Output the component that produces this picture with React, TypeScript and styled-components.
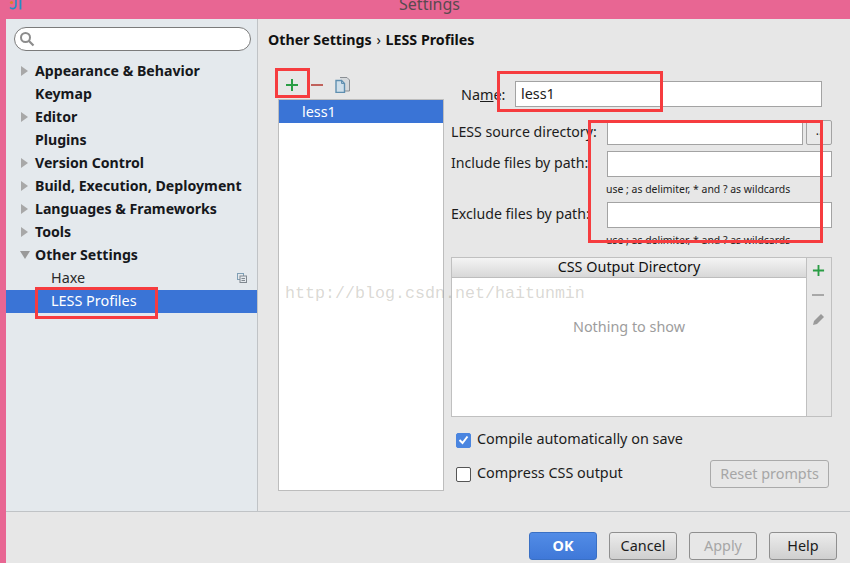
import React from "react";
import styled, { createGlobalStyle } from "styled-components";

const sans = `"Noto Sans", "Open Sans", sans-serif`;

const GlobalStyle = createGlobalStyle`
  html, body { margin: 0; padding: 0; background: #e7e7e7; }
  body { width: 850px; height: 563px; overflow: hidden; font-family: ${sans}; }
`;

const treeItems = [
  { label: "Appearance & Behavior", arrow: "right" },
  { label: "Keymap" },
  { label: "Editor", arrow: "right" },
  { label: "Plugins" },
  { label: "Version Control", arrow: "right" },
  { label: "Build, Execution, Deployment", arrow: "right" },
  { label: "Languages & Frameworks", arrow: "right" },
  { label: "Tools", arrow: "right" },
  { label: "Other Settings", arrow: "down" },
];

const Logo = () => (
  <LogoSvg viewBox="0 0 14 10" width="14" height="10">
    <circle cx="2.5" cy="2.5" r="1.6" fill="#d9822b" />
    <path d="M1 7.5 C3 9.5 7 9 7 5 V0" stroke="#1f8fc4" strokeWidth="1.6" fill="none" />
    <path d="M11.5 0 V9.5" stroke="#1f8fc4" strokeWidth="1.8" fill="none" />
  </LogoSvg>
);

const Plus = ({ size = 14 }: { size?: number }) => (
  <svg width={size} height={size} viewBox="0 0 14 14">
    <path d="M7 1 V13 M1 7 H13" stroke="#2a9d45" strokeWidth="2" />
  </svg>
);

const CopyIcon = () => (
  <svg width="15" height="16" viewBox="0 0 15 16">
    <path d="M5 0.5 H12 L14.5 3 V14 H10" fill="#d5d9dc" stroke="#8a8f94" />
    <path d="M1 3.5 H6.5 L9.5 6.5 V15.5 H1 Z" fill="#cfdfea" stroke="#5f8fb0" strokeWidth="1.4" />
    <path d="M6.5 3.5 V6.5 H9.5" fill="none" stroke="#5f8fb0" />
  </svg>
);

const App = () => (
  <>
    <GlobalStyle />
    <Screen>
      <TitleBar>
        <Logo />
        <TitleText>Settings</TitleText>
      </TitleBar>
      <Main>
        <Sidebar>
          <SearchBox>
            <svg width="16" height="16" viewBox="0 0 16 16">
              <circle cx="6.5" cy="6.5" r="4.5" fill="none" stroke="#8c8c8c" strokeWidth="2" />
              <path d="M10 10 L14.5 14.5" stroke="#8c8c8c" strokeWidth="2.2" />
            </svg>
          </SearchBox>
          <Tree>
            {treeItems.map((item) => (
              <TreeRow key={item.label}>
                <Arrow $dir={item.arrow} />
                <TreeLabel>{item.label}</TreeLabel>
              </TreeRow>
            ))}
            <SubRow>
              Haxe
              <svg width="10" height="10" viewBox="0 0 10 10">
                <rect x="0.5" y="0.5" width="6" height="6" fill="none" stroke="#7f9fb5" />
                <rect x="3" y="3" width="6.5" height="6.5" fill="#e4e9ed" stroke="#808890" />
                <path d="M4.5 5.5 H8 M4.5 7.5 H8" stroke="#808890" />
              </svg>
            </SubRow>
            <SubRow $selected>LESS Profiles</SubRow>
          </Tree>
        </Sidebar>
        <Content>
          <Breadcrumb>
            Other Settings <Chevron>›</Chevron> LESS Profiles
          </Breadcrumb>
          <Columns>
            <ListColumn>
              <ListToolbar>
                <Plus size={14} />
                <MinusBar />
                <CopyIcon />
              </ListToolbar>
              <ProfileList>
                <ProfileRow>less1</ProfileRow>
              </ProfileList>
            </ListColumn>
            <Splitter />
            <FormColumn>
              <NameRow>
                <NameLabel>
                  Na<u>m</u>e:
                </NameLabel>
                <TextBox $width={307}>less1</TextBox>
              </NameRow>
              <DirRow>
                <FieldLabel>LESS source directory:</FieldLabel>
                <TextBox $width={196} $height={25} />
                <BrowseButton>..</BrowseButton>
              </DirRow>
              <PathRow>
                <FieldLabel>Include files by path:</FieldLabel>
                <TextBox $width={225} />
              </PathRow>
              <Hint>use ; as delimiter, * and ? as wildcards</Hint>
              <PathRow>
                <FieldLabel>Exclude files by path:</FieldLabel>
                <TextBox $width={225} />
              </PathRow>
              <Hint>use ; as delimiter, * and ? as wildcards</Hint>
              <TablePanel>
                <Table>
                  <TableHeader>CSS Output Directory</TableHeader>
                  <TableBody>Nothing to show</TableBody>
                </Table>
                <TableTools>
                  <Plus size={13} />
                  <SmallMinus />
                  <svg width="13" height="13" viewBox="0 0 13 13">
                    <path d="M1 12 L2 8 L9 1 L12 4 L5 11 Z" fill="#9a9a9a" />
                  </svg>
                </TableTools>
              </TablePanel>
              <CheckRow>
                <CheckBox $checked>
                  <svg width="11" height="10" viewBox="0 0 11 10">
                    <path d="M1.5 5 L4.5 8 L9.5 1.5" fill="none" stroke="#fff" strokeWidth="2" />
                  </svg>
                </CheckBox>
                <CheckText>Compile automatically on save</CheckText>
              </CheckRow>
              <CompressRow>
                <CheckBox />
                <CheckText>Compress CSS output</CheckText>
                <ResetButton>Reset prompts</ResetButton>
              </CompressRow>
            </FormColumn>
          </Columns>
        </Content>
      </Main>
      <Footer>
        <DialogButton $primary>OK</DialogButton>
        <DialogButton>Cancel</DialogButton>
        <DialogButton $disabled>Apply</DialogButton>
        <DialogButton>Help</DialogButton>
      </Footer>
      <Watermark>http://blog.csdn.net/haitunmin</Watermark>
      <RedBox $x={275} $y={68} $w={35} $h={30} />
      <RedBox $x={497} $y={71} $w={166} $h={41} />
      <RedBox $x={588} $y={120} $w={235} $h={123} />
      <RedBox $x={35} $y={287} $w={123} $h={32} />
    </Screen>
  </>
);

export default App;

const Screen = styled.div`
  position: relative;
  width: 850px;
  height: 563px;
  display: flex;
  flex-direction: column;
  background: #e7e7e7;
  border-left: 6px solid #e86693;
  box-sizing: border-box;
  color: #1c1c1c;
  font-size: 14.4px;
  overflow: hidden;
`;

const TitleBar = styled.div`
  height: 19px;
  margin-left: -6px;
  flex: none;
  background: #e86693;
  position: relative;
  display: flex;
  justify-content: center;
  overflow: hidden;
`;

const LogoSvg = styled.svg`
  position: absolute;
  left: 9px;
  top: 0;
`;

const TitleText = styled.div`
  font-size: 16px;
  line-height: 20px;
  margin-top: -6px;
  margin-left: 9px;
  color: #5a4a50;
`;

const Main = styled.div`
  height: 493px;
  flex: none;
  display: flex;
  border-bottom: 1px solid #c0c3c6;
  box-sizing: border-box;
`;

const Sidebar = styled.div`
  width: 252px;
  flex: none;
  box-sizing: border-box;
  background: #e4e9ed;
  border-right: 1px solid #c0c3c6;
  padding-top: 8px;
`;

const SearchBox = styled.div`
  width: 237px;
  height: 24px;
  margin-left: 8px;
  box-sizing: border-box;
  background: #fff;
  border: 1px solid #7b7b7b;
  border-radius: 12px;
  padding: 3px 4px;
  display: flex;
  align-items: center;
`;

const Tree = styled.div`
  margin-top: 9px;
`;

const TreeRow = styled.div`
  height: 23px;
  box-sizing: border-box;
  padding: 0 0 2px 14px;
  display: flex;
  align-items: center;
`;

const Arrow = styled.span<{ $dir?: string }>`
  width: 0;
  height: 0;
  box-sizing: content-box;
  margin-right: ${(p) => (p.$dir === "down" ? "5px" : "7px")};
  margin-left: ${(p) => (p.$dir === "down" ? "0" : "1px")};
  border-style: solid;
  border-color: transparent;
  ${(p) =>
    p.$dir === "down"
      ? "border-width: 8px 5px 0 5px; border-top-color: #9a9a9a;"
      : "border-width: 5px 0 5px 7px; border-left-color: #a8a8a8;"}
  ${(p) => (!p.$dir ? "border-width: 0; margin: 0 0 0 15px;" : "")}
`;

const TreeLabel = styled.span`
  font-weight: 700;
  font-size: 14.15px;
  color: #16181c;
`;

const SubRow = styled.div<{ $selected?: boolean }>`
  height: 23px;
  box-sizing: border-box;
  display: flex;
  align-items: center;
  justify-content: space-between;
  padding: 0 10px 2px 45px;
  background: ${(p) => (p.$selected ? "#3a74d6" : "transparent")};
  color: ${(p) => (p.$selected ? "#fff" : "#2a2a2a")};
`;

const Content = styled.div`
  flex: 1;
  min-width: 0;
  padding: 10px 0 0 10px;
`;

const Breadcrumb = styled.div`
  font-weight: 700;
  font-size: 14.25px;
  line-height: 21px;
  color: #111;
`;

const Chevron = styled.span`
  font-weight: 400;
  margin: 0 1px;
`;

const Columns = styled.div`
  display: flex;
  padding: 21px 0 0 10px;
`;

const ListColumn = styled.div`
  width: 166px;
  flex: none;
  display: flex;
  flex-direction: column;
`;

const ListToolbar = styled.div`
  height: 28px;
  display: flex;
  align-items: center;
  padding-left: 7px;
  gap: 12px;
`;

const MinusBar = styled.span`
  width: 12px;
  height: 2px;
  background: #c0625c;
`;

const ProfileList = styled.div`
  height: 392px;
  box-sizing: border-box;
  border: 1px solid #bdbdbd;
  background: #fff;
`;

const ProfileRow = styled.div`
  height: 23px;
  line-height: 23px;
  padding-left: 23px;
  background: #3a74d6;
  color: #fff;
`;

const Splitter = styled.div`
  width: 3px;
  height: 18px;
  margin: 201px 3px 0 1px;
  flex: none;
  background-image: radial-gradient(#a0a0a0 0.6px, transparent 0.7px);
  background-size: 2px 2px;
`;

const FormColumn = styled.div`
  width: 381px;
  flex: none;
  display: flex;
  flex-direction: column;
`;

const NameRow = styled.div`
  display: flex;
  align-items: center;
  height: 26px;
  margin-top: 10px;
  padding-left: 10px;
`;

const NameLabel = styled.label`
  width: 54px;
  flex: none;
`;

const FieldLabel = styled.label`
  width: 156px;
  flex: none;
  white-space: nowrap;
  font-size: 14.15px;
  line-height: 18px;
  padding-bottom: 2px;
`;

const TextBox = styled.div<{ $width: number; $height?: number }>`
  width: ${(p) => p.$width}px;
  height: ${(p) => p.$height ?? 26}px;
  box-sizing: border-box;
  flex: none;
  background: #fff;
  border: 1px solid #a3a3a3;
  padding-left: 5px;
  line-height: 24px;
`;

const DirRow = styled.div`
  display: flex;
  align-items: center;
  height: 25px;
  margin-top: 13px;
`;

const BrowseButton = styled.div`
  width: 26px;
  height: 25px;
  box-sizing: border-box;
  margin-left: 3px;
  border: 1px solid #a3a3a3;
  border-radius: 2px;
  text-align: center;
  font-size: 12px;
  line-height: 20px;
  background: #e9e9e9;
`;

const PathRow = styled.div`
  display: flex;
  align-items: center;
  height: 26px;
  margin-top: 6px;
`;

const Hint = styled.div`
  height: 16px;
  margin-top: 3px;
  padding-left: 155px;
  font-size: 10.45px;
  line-height: 18px;
  color: #222;
  white-space: nowrap;
`;

const TablePanel = styled.div`
  display: flex;
  height: 160px;
  margin-top: 10px;
  box-sizing: border-box;
  border: 1px solid #c0c0c0;
`;

const Table = styled.div`
  width: 354px;
  flex: none;
  display: flex;
  flex-direction: column;
  background: #fff;
  border-right: 1px solid #c0c0c0;
`;

const TableHeader = styled.div`
  height: 19px;
  flex: none;
  line-height: 18px;
  text-align: center;
  color: #111;
  background: linear-gradient(#f4f4f4, #d8d8d8);
  border-bottom: 1px solid #bdbdbd;
`;

const TableBody = styled.div`
  flex: 1;
  display: flex;
  justify-content: center;
  padding-top: 39px;
  color: #9d9d9d;
`;

const TableTools = styled.div`
  flex: 1;
  display: flex;
  flex-direction: column;
  align-items: center;
  padding: 6px 2px 0 0;
  gap: 13px;
`;

const SmallMinus = styled.span`
  width: 12px;
  height: 2px;
  margin: 4px 0;
  background: #a8a8a8;
`;

const CheckRow = styled.div`
  display: flex;
  align-items: center;
  gap: 6px;
  height: 16px;
  margin: 15px 0 0 5px;
`;

const CheckText = styled.span`
  line-height: 16px;
  padding-bottom: 2px;
`;

const CompressRow = styled(CheckRow)`
  margin-top: 18px;
  position: relative;
`;

const CheckBox = styled.span<{ $checked?: boolean }>`
  width: 15px;
  height: 15px;
  box-sizing: border-box;
  flex: none;
  display: flex;
  align-items: center;
  justify-content: center;
  border-radius: 2px;
  background: ${(p) => (p.$checked ? "#4a85e0" : "#fff")};
  border: 1px solid ${(p) => (p.$checked ? "#4a85e0" : "#555")};
`;

const ResetButton = styled.div`
  position: absolute;
  left: 254px;
  top: -6px;
  width: 119px;
  height: 28px;
  box-sizing: border-box;
  border: 1px solid #aaa;
  border-radius: 3px;
  text-align: center;
  line-height: 25px;
  color: #a6a6a6;
`;

const Footer = styled.div`
  flex: 1;
  display: flex;
  justify-content: flex-end;
  gap: 12px;
  padding: 20px 13px 0 0;
`;

const DialogButton = styled.div<{ $primary?: boolean; $disabled?: boolean }>`
  width: 68px;
  height: 28px;
  box-sizing: border-box;
  border-radius: 3px;
  text-align: center;
  line-height: 26px;
  font-weight: ${(p) => (p.$primary ? 700 : 400)};
  color: ${(p) => (p.$primary ? "#fff" : p.$disabled ? "#a6a6a6" : "#1c1c1c")};
  border: 1px solid ${(p) => (p.$primary ? "#3a70c4" : "#8f8f8f")};
  background: ${(p) =>
    p.$primary
      ? "linear-gradient(#528ce6, #3f78d8)"
      : p.$disabled
        ? "transparent"
        : "linear-gradient(#ececec, #cfcfcf)"};
`;

const Watermark = styled.div`
  position: absolute;
  left: 279px;
  top: 284px;
  font-family: "Liberation Mono", monospace;
  font-size: 16.67px;
  line-height: 20px;
  color: rgba(130, 125, 110, 0.3);
  pointer-events: none;
`;

const RedBox = styled.div<{ $x: number; $y: number; $w: number; $h: number }>`
  position: absolute;
  left: ${(p) => p.$x - 6}px;
  top: ${(p) => p.$y}px;
  width: ${(p) => p.$w}px;
  height: ${(p) => p.$h}px;
  box-sizing: border-box;
  border: 3px solid #f63c3f;
  pointer-events: none;
`;
